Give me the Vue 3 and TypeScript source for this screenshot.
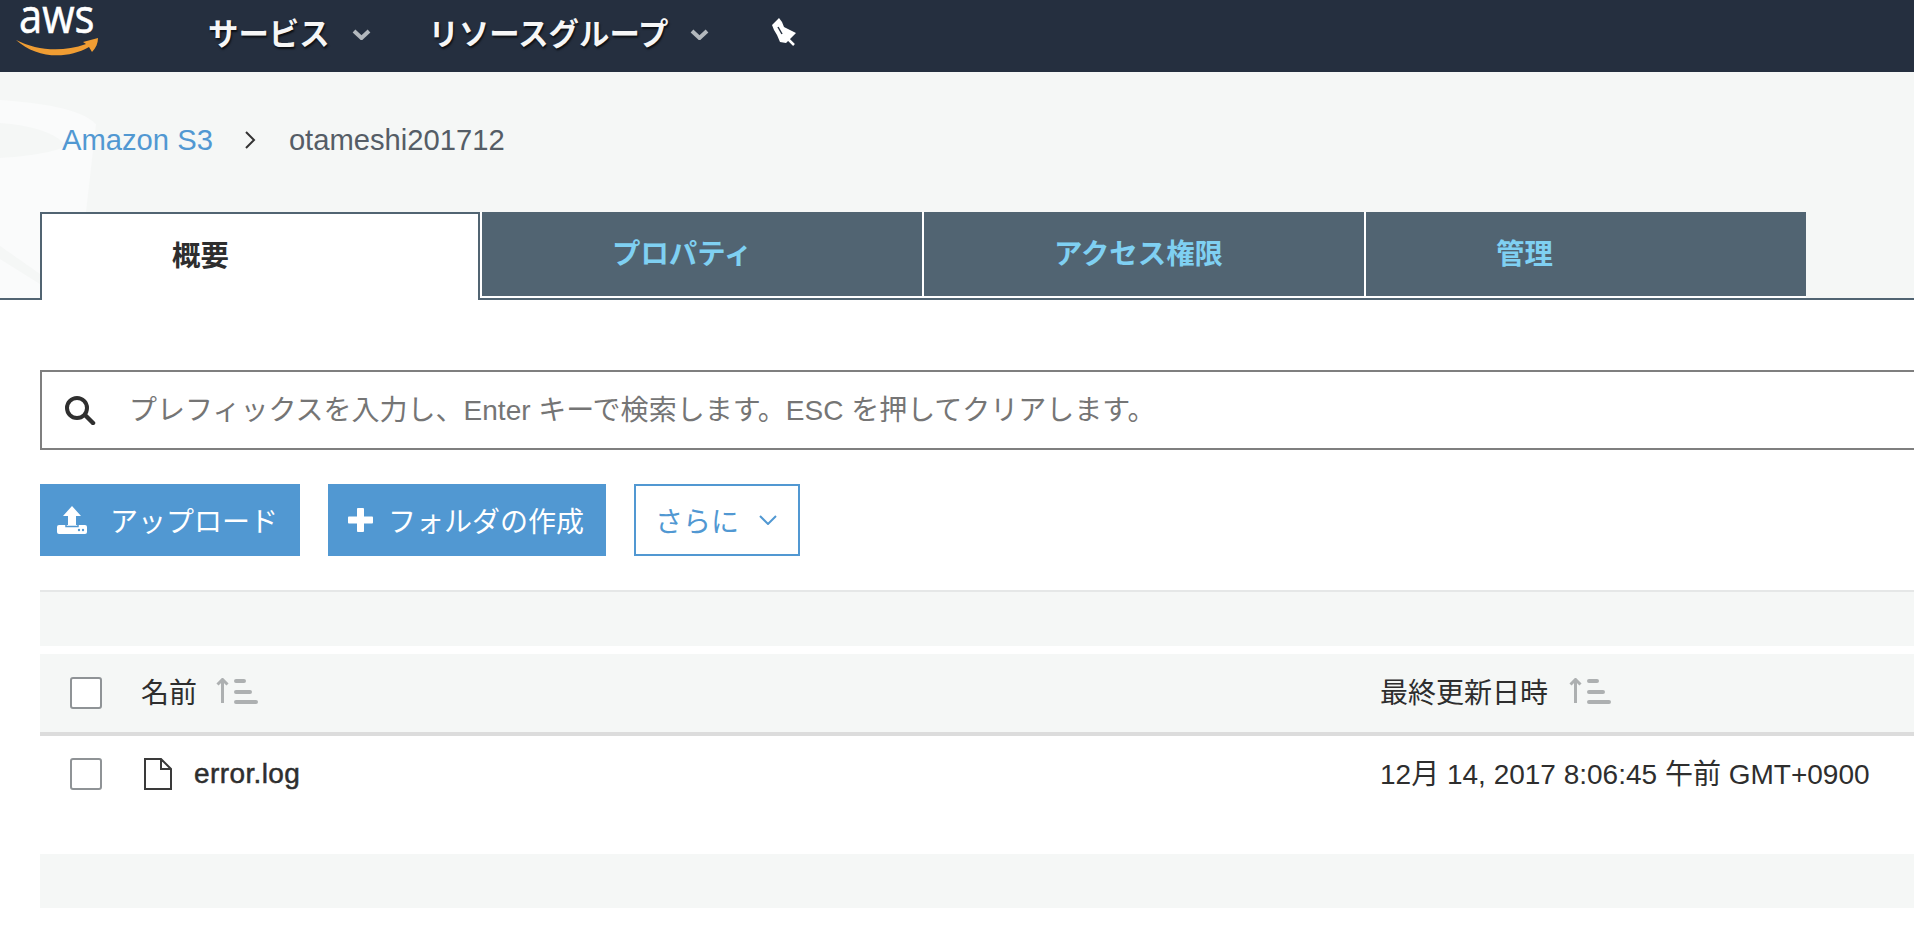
<script setup lang="ts">
const tabs: string[] = ['プロパティ', 'アクセス権限', '管理']
</script>

<template>
  <div class="page">
    <header class="topbar">
      <div class="logo">
        <span class="logo-word">aws</span>
        <svg class="smile" width="84" height="20" viewBox="0 0 84 20">
          <path d="M0 2C20 12 45 15 70 6L67 4L82 0C82 5 80 10 76 14L73 9C50 22 20 20 0 2Z" fill="#f09d33" />
        </svg>
      </div>
      <nav class="nav">
        <span class="nav-label">サービス</span>
        <svg class="nav-caret" width="19" height="11" viewBox="0 0 19 11"><path d="M2 2L9.5 9L17 2" fill="none" stroke="#b3b8bd" stroke-width="4" /></svg>
        <span class="nav-label second">リソースグループ</span>
        <svg class="nav-caret" width="19" height="11" viewBox="0 0 19 11"><path d="M2 2L9.5 9L17 2" fill="none" stroke="#b3b8bd" stroke-width="4" /></svg>
        <svg class="pin" width="26" height="30" viewBox="0 0 26 30">
          <path d="M1 8L8 1L11 5L13 10L25 16L15 26L9 25L6 18L3 13Z" fill="#fff" />
          <path d="M16 21L23 28" stroke="#fff" stroke-width="2.5" />
          <path d="M7 10L11 17" stroke="#252f3f" stroke-width="1.5" />
        </svg>
      </nav>
    </header>

    <section class="hero">
      <svg class="watermark" width="96" height="200" viewBox="0 0 96 200">
        <path d="M0 0C40 3 80 8 96 24L86 112H40V198H0Z" fill="#fafbfb" />
        <path d="M0 23C30 25 55 32 66 46C55 52 30 56 0 58Z" fill="#f5f7f6" />
        <path d="M0 146L40 174V184L0 159Z" fill="#f5f7f6" />
      </svg>
      <div class="crumbs">
        <a class="crumb-link">Amazon S3</a>
        <svg class="crumb-sep" width="12" height="18" viewBox="0 0 12 18"><path d="M2 1L10 9L2 17" fill="none" stroke="#333" stroke-width="2" /></svg>
        <span class="crumb-current">otameshi201712</span>
      </div>
      <div class="tabs">
        <div class="tab active">概要</div>
        <div v-for="tab in tabs" :key="tab" class="tab">{{ tab }}</div>
      </div>
    </section>

    <main class="content">
      <div class="search">
        <svg class="search-icon" width="32" height="30" viewBox="0 0 32 30">
          <circle cx="12" cy="13" r="10" fill="none" stroke="#2f2f2f" stroke-width="4" />
          <path d="M20 20L28 28" stroke="#2f2f2f" stroke-width="4.5" stroke-linecap="round" />
        </svg>
        <span class="placeholder">プレフィックスを入力し、Enter キーで検索します。ESC を押してクリアします。</span>
      </div>

      <div class="actions">
        <button class="btn upload">
          <svg width="31" height="28" viewBox="0 0 31 28">
            <path d="M15 0L24 10H19V19H11V10H6Z" fill="#fff" />
            <rect x="0" y="19" width="30" height="9" rx="2" fill="#fff" />
            <path d="M9 19V20.5H21V19" fill="none" stroke="#5198d2" stroke-width="1.5" />
            <circle cx="22" cy="24" r="1.2" fill="#5198d2" />
            <circle cx="26" cy="24" r="1.2" fill="#5198d2" />
          </svg>
          <span>アップロード</span>
        </button>
        <button class="btn create">
          <svg width="25" height="24" viewBox="0 0 25 24">
            <path d="M9 1C9 .5 9.500 0 10 0H15C15.500 0 16 .5 16 1V8.500H24C24.500 8.500 25 9 25 9.500V14.500C25 15 24.500 15.500 24 15.500H16V23C16 23.500 15.500 24 15 24H10C9.500 24 9 23.500 9 23V15.500H1C.5 15.500 0 15 0 14.500V9.500C0 9 .5 8.500 1 8.500H9Z" fill="#fff" />
          </svg>
          <span>フォルダの作成</span>
        </button>
        <button class="btn more">
          <span>さらに</span>
          <svg width="18" height="10" viewBox="0 0 18 10"><path d="M1 1L9 9L17 1" fill="none" stroke="#5198d2" stroke-width="2" /></svg>
        </button>
      </div>

      <div class="strip top-strip"></div>

      <div class="grid-row head">
        <span class="check"></span>
        <div class="cell lifted">
          <span>名前</span>
          <svg class="sort" width="42" height="26" viewBox="0 0 42 26">
            <path d="M6.500 25V1M1.500 6.500L6.500 1.500L11.500 6.500" fill="none" stroke="#adb0b1" stroke-width="3" />
            <path d="M20 3H28M20 14H34M20 24H40" stroke="#adb0b1" stroke-width="4" stroke-linecap="round" />
          </svg>
        </div>
        <div class="cell lifted">
          <span>最終更新日時</span>
          <svg class="sort wide" width="42" height="26" viewBox="0 0 42 26">
            <path d="M6.500 25V1M1.500 6.500L6.500 1.500L11.500 6.500" fill="none" stroke="#adb0b1" stroke-width="3" />
            <path d="M20 3H28M20 14H34M20 24H40" stroke="#adb0b1" stroke-width="4" stroke-linecap="round" />
          </svg>
        </div>
      </div>

      <div class="grid-row body">
        <span class="check"></span>
        <div class="cell file">
          <svg width="28" height="32" viewBox="0 0 28 32">
            <path d="M1 1H17L27 11V31H1ZM17 1V11H27" fill="none" stroke="#3a3a3a" stroke-width="2" />
          </svg>
          <span class="file-name">error.log</span>
        </div>
        <div class="cell lifted-date">12月 14, 2017 8:06:45 午前 GMT+0900</div>
      </div>

      <div class="strip"></div>
    </main>
  </div>
</template>

<style>
body {
  background: #fff;
  overflow: hidden;
}
</style>

<style scoped>
.page {
  width: 1914px;
  height: 928px;
  overflow: hidden;
  font-family: "Liberation Sans", "Noto Sans CJK JP", sans-serif;
  font-size: 28px;
  color: #2e2e2e;
}
.topbar {
  height: 72px;
  background: #252f3f;
  display: flex;
  align-items: center;
}
.logo {
  width: 208px;
  height: 72px;
  flex: none;
  position: relative;
}
.logo-word {
  position: absolute;
  left: 19px;
  top: 0;
  font-family: "Open Sans", sans-serif;
  font-size: 48px;
  line-height: 30px;
  color: #fff;
  -webkit-text-stroke: 0.6px #fff;
  display: inline-block;
  transform: scaleX(0.87);
  transform-origin: left center;
}
.smile {
  position: absolute;
  left: 16px;
  top: 38px;
}
.nav {
  display: flex;
  align-items: center;
  margin-top: -8px;
}
.nav-label {
  font-size: 30.4px;
  font-weight: 700;
  color: #f6f6f6;
  text-shadow: 1px 2px 2px rgba(0, 0, 0, 0.7);
}
.nav-caret {
  margin-left: 22px;
  position: relative;
  top: 2px;
}
.second {
  margin-left: 58px;
}
.pin {
  margin-left: 62px;
}
.hero {
  position: relative;
  height: 228px;
  background: #f5f7f6;
  border-bottom: 2px solid #516472;
  box-sizing: border-box;
  padding: 47px 0 0 40px;
}
.watermark {
  position: absolute;
  left: 0;
  top: 28px;
}
.crumbs {
  position: relative;
  height: 40px;
  box-sizing: border-box;
  padding-top: 2px;
  margin-bottom: 53px;
  display: flex;
  align-items: center;
  font-size: 29.2px;
  padding-left: 22px;
}
.crumb-link {
  color: #5198d2;
}
.crumb-sep {
  margin-left: 31px;
}
.crumb-current {
  margin-left: 33px;
  color: #555d66;
}
.tabs {
  position: relative;
  display: flex;
  align-items: flex-start;
}
.tab {
  width: 442px;
  height: 86px;
  box-sizing: border-box;
  background: #516472;
  color: #7fd0f2;
  border-left: 2px solid #fff;
  border-bottom: 2px solid #fff;
  padding: 0 0 5px 130px;
  font-size: 28.4px;
  font-weight: 700;
  display: flex;
  align-items: center;
}
.tab.active {
  width: 440px;
  height: 88px;
  background: #fff;
  color: #2e2e2e;
  border: 2px solid #516472;
  border-bottom: none;
  padding-bottom: 7px;
}
.content {
  padding: 70px 0 0 40px;
}
.search {
  height: 80px;
  box-sizing: border-box;
  border: 2px solid #7f7f7f;
  border-right: none;
  display: flex;
  align-items: center;
  padding-left: 23px;
}
.placeholder {
  margin-left: 32px;
  padding-bottom: 4px;
  color: #757575;
  white-space: nowrap;
}
.actions {
  display: flex;
  gap: 28px;
  margin-top: 34px;
}
.btn {
  height: 72px;
  box-sizing: border-box;
  border: none;
  background: #5198d2;
  color: #fff;
  font: inherit;
  display: flex;
  align-items: center;
  white-space: nowrap;
}
.upload {
  padding: 0 22px 0 17px;
  gap: 22px;
}
.create {
  padding: 0 22px 0 20px;
  gap: 15px;
}
.more {
  background: #fff;
  color: #5198d2;
  border: 2px solid #5198d2;
  padding: 0 21px 0 19px;
  gap: 20px;
}
.strip {
  height: 54px;
  background: #f5f7f6;
}
.top-strip {
  height: 56px;
  box-sizing: border-box;
  margin-top: 34px;
  border-top: 2px solid #e5e7e7;
}
.grid-row {
  display: grid;
  grid-template-columns: 71px 1239px 1fr;
  padding-left: 30px;
}
.head {
  height: 82px;
  box-sizing: border-box;
  margin-top: 8px;
  background: #f5f7f6;
  border-bottom: 4px solid #dcdcdc;
  align-items: center;
}
.body {
  height: 118px;
  box-sizing: border-box;
  padding-top: 22px;
  align-items: start;
}
.check {
  width: 32px;
  height: 32px;
  box-sizing: border-box;
  border: 2px solid #8f9396;
  border-radius: 3px;
  background: #fff;
}
.cell {
  display: flex;
  align-items: center;
  height: 32px;
  white-space: nowrap;
}
.lifted {
  margin-top: -4px;
}
.lifted-date {
  margin-top: -2px;
}
.sort {
  margin-left: 19px;
}
.sort.wide {
  margin-left: 21px;
}
.file svg {
  margin-left: 3px;
}
.file-name {
  margin-left: 22px;
  letter-spacing: 0.4px;
  -webkit-text-stroke: 0.5px #2e2e2e;
}
</style>
